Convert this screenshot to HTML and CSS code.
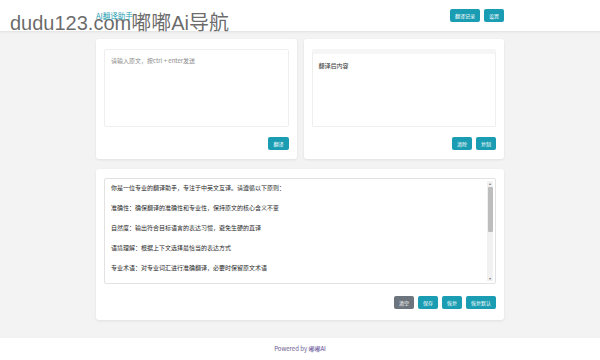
FILE: index.html
```html
<!DOCTYPE html>
<html>
<head>
    <title>AI翻译助手</title>
    <link rel="stylesheet" href="styles.css">
</head>
<body>
    <!-- Watermark -->
    <div class="watermark">dudu123.com嘟嘟Ai导航</div>

    <!-- Header -->
    <div class="header">
        <div class="container header-inner">
            <div class="brand">AI翻译助手</div>
            <div class="header-actions">
                <button class="btn">翻译记录</button>
                <button class="btn">设置</button>
            </div>
        </div>
    </div>

    <!-- Main Content -->
    <div class="main container">
        <div class="top-row">
            <div class="card">
                <textarea class="input-box" placeholder="请输入原文，按ctrl + enter发送"></textarea>
                <div class="actions">
                    <button class="btn">翻译</button>
                </div>
            </div>
            <div class="card">
                <div class="output-box">
                    <div class="output-text">翻译后内容</div>
                </div>
                <div class="actions">
                    <button class="btn">清除</button>
                    <button class="btn">复制</button>
                </div>
            </div>
        </div>

        <div class="card prompt-card">
            <div class="prompt-box">
                <div class="prompt-text">你是一位专业的翻译助手，专注于中英文互译。请遵循以下原则：

准确性：确保翻译的准确性和专业性，保持原文的核心含义不变

自然度：输出符合目标语言的表达习惯，避免生硬的直译

语境理解：根据上下文选择最恰当的表达方式

专业术语：对专业词汇进行准确翻译，必要时保留原文术语</div>
                <div class="scrollbar">
                    <span class="scroll-arrow">▴</span>
                    <span class="scroll-thumb"></span>
                    <span class="scroll-space"></span>
                    <span class="scroll-arrow">▾</span>
                </div>
            </div>
            <div class="actions">
                <button class="btn btn-gray">清空</button>
                <button class="btn">保存</button>
                <button class="btn">恢复</button>
                <button class="btn">恢复默认</button>
            </div>
        </div>
    </div>

    <!-- Footer -->
    <div class="footer">Powered by <span class="footer-name">嘟嘟AI</span></div>
</body>
</html>
```

FILE: styles.css
```css
:root {
    --accent: #1a9db3;
    --gray-btn: #6c757d;
    --background: #f3f3f3;
    --card-bg: #ffffff;
    --text: #333333;
}

* {
    margin: 0;
    padding: 0;
    box-sizing: border-box;
}

body {
    font-family: "Noto Sans CJK SC", "Noto Sans", sans-serif;
    background-color: var(--background);
    color: var(--text);
    width: 600px;
    height: 360px;
    overflow: hidden;
    display: flex;
    flex-direction: column;
}

.container {
    width: 408px;
    margin: 0 auto;
}

/* Watermark */
.watermark {
    position: absolute;
    left: 10px;
    top: 7px;
    font-family: "Liberation Sans", "Noto Sans CJK SC", sans-serif;
    font-size: 20px;
    color: rgba(80, 80, 80, 0.85);
    z-index: 5;
    pointer-events: none;
}

/* Header */
.header {
    background-color: #ffffff;
    height: 32px;
    border-bottom: 1px solid #e6e6e6;
    box-shadow: 0 1px 2px rgba(0, 0, 0, 0.04);
}

.header-inner {
    display: flex;
    justify-content: space-between;
    height: 100%;
}

.brand {
    color: var(--accent);
    font-size: 7.5px;
    padding-top: 10px;
    position: relative;
    z-index: 6;
}

.header-actions {
    display: flex;
    gap: 4px;
    padding-top: 9px;
}

/* Buttons */
.btn {
    background-color: var(--accent);
    color: #ffffff;
    border: none;
    border-radius: 2px;
    height: 13px;
    padding: 0 5px;
    font-family: "Noto Sans CJK SC", sans-serif;
    font-size: 5px;
    cursor: pointer;
}

.btn-gray {
    background-color: var(--gray-btn);
}

/* Main */
.main {
    padding-top: 7px;
    display: flex;
    flex-direction: column;
    gap: 10px;
    flex: 1;
}

.top-row {
    display: grid;
    grid-template-columns: 1fr 1fr;
    gap: 7px;
}

.card {
    background-color: var(--card-bg);
    border-radius: 3px;
    box-shadow: 0 1px 3px rgba(0, 0, 0, 0.08);
    padding: 10px 8px 9px;
}

.input-box,
.output-box {
    display: block;
    width: 100%;
    height: 78px;
    border: 1px solid #eeeeee;
    border-radius: 2px;
    background-color: #ffffff;
    resize: none;
    outline: none;
}

.input-box {
    padding: 6px 6px;
    font-family: "Noto Sans CJK SC", sans-serif;
    font-size: 6px;
}

.input-box::placeholder {
    color: #8a8a8a;
}

.output-box {
    padding: 7px 6px;
    border-top: 5px solid #f6f6f6;
}

.output-text {
    font-size: 6px;
    color: #333333;
}

.actions {
    display: flex;
    justify-content: flex-end;
    gap: 4px;
    margin-top: 10px;
}

/* Prompt card */
.prompt-card {
    padding: 9px 8px 11px;
}

.prompt-box {
    display: flex;
    height: 106px;
    border: 1px solid #e2e2e2;
    border-radius: 2px;
}

.prompt-text {
    flex: 1;
    overflow: hidden;
    padding: 4px 6px;
    font-size: 6px;
    line-height: 10px;
    color: #2a2a2a;
    white-space: pre-line;
}

.scrollbar {
    width: 6px;
    margin: 2px 2px 2px 0;
    background-color: #f1f1f1;
    display: flex;
    flex-direction: column;
    align-items: center;
}

.scroll-arrow {
    font-size: 4px;
    line-height: 5px;
    color: #777777;
}

.scroll-thumb {
    width: 5px;
    height: 45px;
    margin-top: 1px;
    background-color: #bdbdbd;
    border-radius: 1px;
}

.scroll-space {
    flex: 1;
}

.prompt-card .actions {
    margin-top: 12px;
}

/* Footer */
.footer {
    background-color: #ffffff;
    height: 22px;
    text-align: center;
    font-size: 6px;
    line-height: 22px;
    color: #6a5a8e;
}

.footer-name {
    color: #5b3f92;
}
```
